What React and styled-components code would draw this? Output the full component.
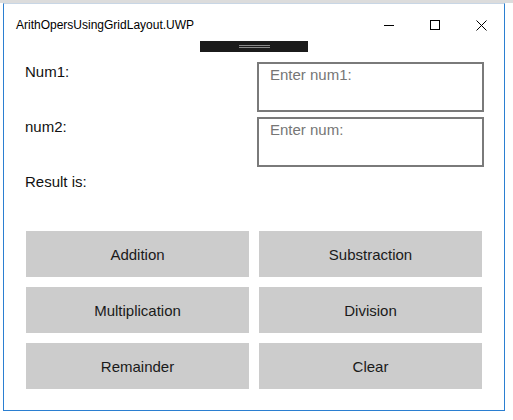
import React from 'react';
import styled, { createGlobalStyle } from 'styled-components';

const GlobalStyle = createGlobalStyle`
  html, body {
    margin: 0;
    padding: 0;
    background: #ffffff;
    font-family: "Segoe UI", "Liberation Sans", Arial, sans-serif;
  }
  body {
    height: 420px;
    overflow: hidden;
  }
`;

const TopStrip = styled.div`
  height: 3px;
  background: #dcdcdc;
`;

const Window = styled.div`
  position: relative;
  width: 500px;
  height: 406px;
  margin-left: 3px;
  border: 1px solid #2b7fd1;
  border-top-color: #c8d6e5;
  background: #ffffff;
`;

const TitleBar = styled.div`
  display: flex;
  align-items: center;
  height: 42px;
`;

const Title = styled.span`
  flex: 1;
  padding-left: 12px;
  font-size: 12px;
  color: #000000;
  line-height: 16px;
`;

const Controls = styled.div`
  display: flex;
  height: 100%;
`;

const ControlButton = styled.div`
  width: 46px;
  height: 100%;
  display: flex;
  align-items: center;
  justify-content: center;
`;

const DragHandle = styled.div`
  position: absolute;
  top: 37px;
  left: 196px;
  width: 108px;
  height: 11px;
  background: #1b1b1b;
  display: flex;
  flex-direction: column;
  align-items: center;
  justify-content: center;
  gap: 1px;
`;

const HandleLine = styled.div`
  width: 31px;
  height: 1px;
  background: #8a8a8a;
`;

const Content = styled.div`
  padding: 16px 19px 0 21px;
`;

const FormGrid = styled.div`
  display: grid;
  grid-template-columns: 232px 227px;
  grid-auto-rows: 50px;
  row-gap: 5px;
`;

const Label = styled.div`
  font-size: 15px;
  line-height: 20px;
  color: #111111;
`;

const TextBox = styled.textarea`
  box-sizing: border-box;
  width: 227px;
  height: 50px;
  margin: 0;
  padding: 1px 11px 0;
  border: 2px solid #7a7a7a;
  border-radius: 0;
  outline: none;
  resize: none;
  overflow: hidden;
  background: #ffffff;
  font-family: inherit;
  font-size: 15px;
  line-height: 20px;
  color: #000000;
  display: block;

  &::placeholder {
    color: #767676;
    opacity: 1;
  }
`;

const ButtonGrid = styled.div`
  display: grid;
  grid-template-columns: 223px 223px;
  grid-auto-rows: 46px;
  gap: 10px;
  margin-top: 9px;
  margin-left: 1px;
`;

const OpButton = styled.button`
  margin: 0;
  border: none;
  border-radius: 0;
  background: #cccccc;
  font-family: inherit;
  font-size: 15px;
  color: #1a1a1a;
  padding: 0;
  cursor: pointer;
`;

function MinimizeIcon() {
  return (
    <svg width="10" height="10" viewBox="0 0 10 10">
      <line x1="0" y1="5.5" x2="10" y2="5.5" stroke="#000" strokeWidth="1" />
    </svg>
  );
}

function MaximizeIcon() {
  return (
    <svg width="10" height="10" viewBox="0 0 10 10">
      <rect x="0.5" y="0.5" width="9" height="9" fill="none" stroke="#000" strokeWidth="1" />
    </svg>
  );
}

function CloseIcon() {
  return (
    <svg width="11" height="11" viewBox="0 0 11 11">
      <path d="M0.5 0.5 L10.5 10.5 M10.5 0.5 L0.5 10.5" stroke="#000" strokeWidth="1" />
    </svg>
  );
}

const operations = ['Addition', 'Substraction', 'Multiplication', 'Division', 'Remainder', 'Clear'];

export default function App() {
  return (
    <>
      <GlobalStyle />
      <TopStrip />
      <Window>
        <TitleBar>
          <Title>ArithOpersUsingGridLayout.UWP</Title>
          <Controls>
            <ControlButton>
              <MinimizeIcon />
            </ControlButton>
            <ControlButton>
              <MaximizeIcon />
            </ControlButton>
            <ControlButton>
              <CloseIcon />
            </ControlButton>
          </Controls>
        </TitleBar>
        <DragHandle>
          <HandleLine />
          <HandleLine />
        </DragHandle>
        <Content>
          <FormGrid>
            <Label>Num1:</Label>
            <TextBox placeholder="Enter num1:" />
            <Label>num2:</Label>
            <TextBox placeholder="Enter num:" />
            <Label>Result is:</Label>
          </FormGrid>
          <ButtonGrid>
            {operations.map((op) => (
              <OpButton key={op}>{op}</OpButton>
            ))}
          </ButtonGrid>
        </Content>
      </Window>
    </>
  );
}
